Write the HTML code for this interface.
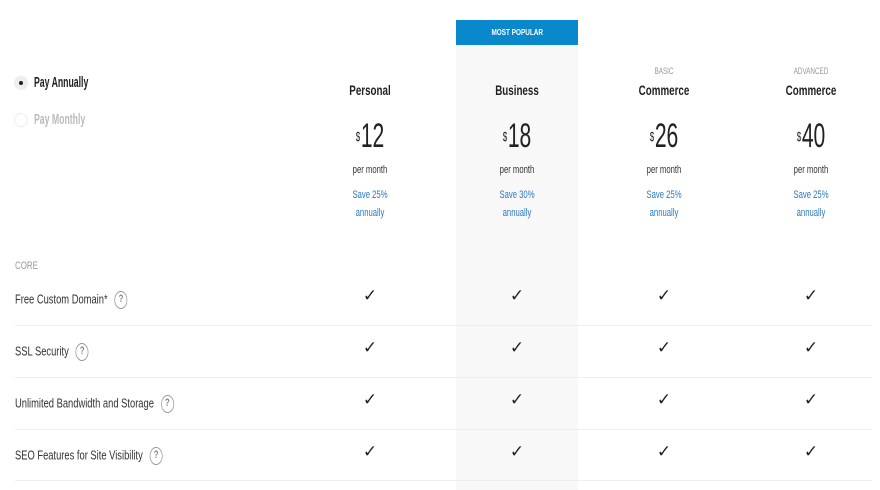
<!DOCTYPE html>
<html><head><meta charset="utf-8"><style>
*{margin:0;padding:0;box-sizing:border-box}
body{width:880px;height:490px;background:#fff;position:relative;overflow:hidden;font-family:"Liberation Sans",sans-serif;color:#222}
.a{position:absolute}
.c{position:absolute;width:140px;text-align:center;transform:scaleX(.7);transform-origin:center}
.l{position:absolute;white-space:nowrap;transform:scaleX(.72);transform-origin:left}
.hl{left:456px;top:20px;width:122px;height:470px;background:#f8f8f8}
.band{left:456px;top:20px;width:122px;height:25px;background:#0a88cc;color:#fff;font-size:8px;font-weight:bold;text-align:center;line-height:25px}
.name{font-size:14px;font-weight:bold;color:#222}
.sub{font-size:9px;color:#999}
.price{font-size:34px;color:#222;line-height:34px;transform:scaleX(.62)}
.price sup{font-size:13px;vertical-align:top;position:relative;top:1px;margin-right:1px}
.pm{font-size:11px;color:#333}
.save{font-size:11px;color:#2b78c2;line-height:18px}
.hr{position:absolute;left:15px;width:857px;height:1px;background:#eee}
.chk{position:absolute;width:20px;text-align:center;font-size:17px;color:#222}
.feat{font-size:13px;color:#333}
.q{display:inline-block;width:18px;height:18px;border:1.5px solid #999;border-radius:50%;font-size:11px;color:#888;text-align:center;line-height:15px;margin-left:6px;vertical-align:middle;font-weight:bold}
</style></head><body>
<div class="a hl"></div>
<div class="a band"><span style="display:inline-block;transform:scaleX(.8)">MOST POPULAR</span></div>

<div class="a" style="left:14px;top:76px;width:14px;height:14px;border-radius:50%;background:#eee"></div>
<div class="a" style="left:19px;top:81px;width:4px;height:4px;border-radius:50%;background:#222"></div>
<div class="l" style="left:34px;top:74px;font-size:15px;font-weight:bold;color:#222;transform:scaleX(.58)">Pay Annually</div>
<div class="a" style="left:14px;top:113px;width:14px;height:14px;border-radius:50%;border:1px solid #eee"></div>
<div class="l" style="left:34px;top:111px;font-size:15px;font-weight:bold;color:#bbb;transform:scaleX(.58)">Pay Monthly</div>

<div class="c name" style="left:300px;top:82px">Personal</div>
<div class="c name" style="left:447px;top:82px">Business</div>
<div class="c sub" style="left:594px;top:66px">BASIC</div>
<div class="c name" style="left:594px;top:82px">Commerce</div>
<div class="c sub" style="left:741px;top:66px">ADVANCED</div>
<div class="c name" style="left:741px;top:82px">Commerce</div>

<div class="c price" style="left:300px;top:119px"><sup>$</sup>12</div>
<div class="c price" style="left:447px;top:119px"><sup>$</sup>18</div>
<div class="c price" style="left:594px;top:119px"><sup>$</sup>26</div>
<div class="c price" style="left:741px;top:119px"><sup>$</sup>40</div>

<div class="c pm" style="left:300px;top:164px">per month</div>
<div class="c pm" style="left:447px;top:164px">per month</div>
<div class="c pm" style="left:594px;top:164px">per month</div>
<div class="c pm" style="left:741px;top:164px">per month</div>

<div class="c save" style="left:300px;top:186px">Save 25%<br>annually</div>
<div class="c save" style="left:447px;top:186px">Save 30%<br>annually</div>
<div class="c save" style="left:594px;top:186px">Save 25%<br>annually</div>
<div class="c save" style="left:741px;top:186px">Save 25%<br>annually</div>

<div class="l" style="left:15px;top:260px;font-size:11px;color:#999">CORE</div>

<div class="l feat" style="left:15px;top:291px">Free Custom Domain* <span class="q">?</span></div>
<div class="l feat" style="left:15px;top:343px">SSL Security <span class="q">?</span></div>
<div class="l feat" style="left:15px;top:395px">Unlimited Bandwidth and Storage <span class="q">?</span></div>
<div class="l feat" style="left:15px;top:447px">SEO Features for Site Visibility <span class="q">?</span></div>

<div class="hr" style="top:325px"></div>
<div class="hr" style="top:377px"></div>
<div class="hr" style="top:429px"></div>
<div class="hr" style="top:480px"></div>

<div class="chk" style="left:360px;top:286px">✓</div><div class="chk" style="left:507px;top:286px">✓</div><div class="chk" style="left:654px;top:286px">✓</div><div class="chk" style="left:801px;top:286px">✓</div>
<div class="chk" style="left:360px;top:338px">✓</div><div class="chk" style="left:507px;top:338px">✓</div><div class="chk" style="left:654px;top:338px">✓</div><div class="chk" style="left:801px;top:338px">✓</div>
<div class="chk" style="left:360px;top:390px">✓</div><div class="chk" style="left:507px;top:390px">✓</div><div class="chk" style="left:654px;top:390px">✓</div><div class="chk" style="left:801px;top:390px">✓</div>
<div class="chk" style="left:360px;top:442px">✓</div><div class="chk" style="left:507px;top:442px">✓</div><div class="chk" style="left:654px;top:442px">✓</div><div class="chk" style="left:801px;top:442px">✓</div>
</body></html>
